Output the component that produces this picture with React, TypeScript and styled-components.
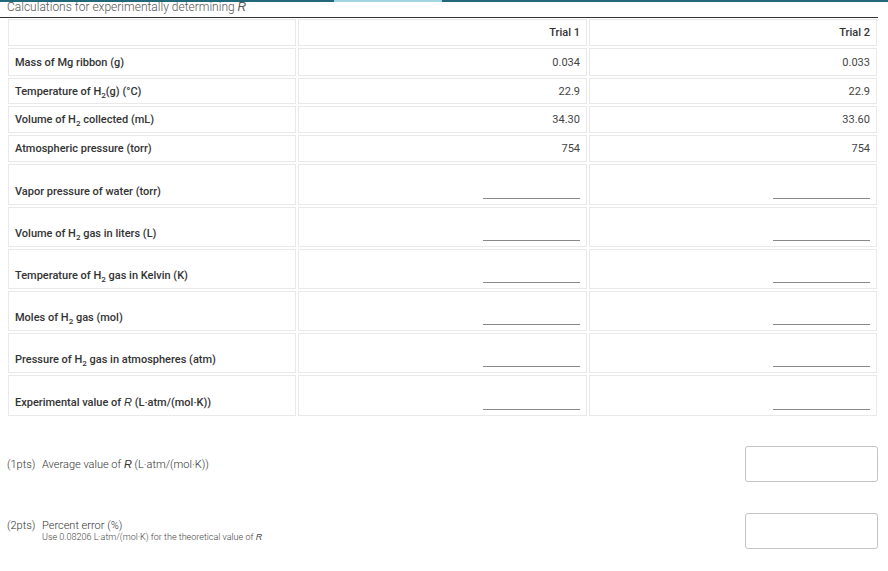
import React from 'react';
import styled, { createGlobalStyle } from 'styled-components';

const GlobalStyle = createGlobalStyle`
  html, body {
    margin: 0;
    padding: 0;
    background: #fff;
    font-family: Roboto, "Liberation Sans", Arial, sans-serif;
    color: #333;
  }
`;

type Row = { label: React.ReactNode; t1?: string; t2?: string; h: number };

const H2 = () => (
  <>
    H<Sub>2</Sub>
  </>
);

const R = () => <Ital>R</Ital>;

const given: Row[] = [
  { label: 'Mass of Mg ribbon (g)', t1: '0.034', t2: '0.033', h: 28 },
  { label: <>Temperature of <H2 />(g) (°C)</>, t1: '22.9', t2: '22.9', h: 26 },
  { label: <>Volume of <H2 /> collected (mL)</>, t1: '34.30', t2: '33.60', h: 27 },
  { label: 'Atmospheric pressure (torr)', t1: '754', t2: '754', h: 27 },
];

const calc: { label: React.ReactNode; h: number }[] = [
  { label: 'Vapor pressure of water (torr)', h: 41 },
  { label: <>Volume of <H2 /> gas in liters (L)</>, h: 40 },
  { label: <>Temperature of <H2 /> gas in Kelvin (K)</>, h: 40 },
  { label: <>Moles of <H2 /> gas (mol)</>, h: 40 },
  { label: <>Pressure of <H2 /> gas in atmospheres (atm)</>, h: 40 },
  { label: <>Experimental value of <R /> (L·atm/(mol·K))</>, h: 41 },
];

const App = () => {
  return (
    <Page>
      <GlobalStyle />
      <TopBar>
        <TopTab />
      </TopBar>
      <Title>
        Calculations for experimentally determining <R />
      </Title>
      <Grid>
        <Cell $h={27} />
        <Cell $h={27} $right>
          <HeadText>Trial 1</HeadText>
        </Cell>
        <Cell $h={27} $right>
          <HeadText>Trial 2</HeadText>
        </Cell>

        {given.map((r, i) => (
          <React.Fragment key={i}>
            <Cell $h={r.h}>
              <Label>{r.label}</Label>
            </Cell>
            <Cell $h={r.h} $right>
              <Value>{r.t1}</Value>
            </Cell>
            <Cell $h={r.h} $right>
              <Value>{r.t2}</Value>
            </Cell>
          </React.Fragment>
        ))}

        {calc.map((r, i) => (
          <React.Fragment key={i}>
            <Cell $h={r.h} $tall>
              <Label $tall>{r.label}</Label>
            </Cell>
            <Cell $h={r.h} $tall $right>
              <Blank />
            </Cell>
            <Cell $h={r.h} $tall $right>
              <Blank />
            </Cell>
          </React.Fragment>
        ))}
      </Grid>

      <Question $first>
        <QText>
          <Pts>(1pts)</Pts>
          <div>
            Average value of <R /> (L·atm/(mol·K))
          </div>
        </QText>
        <AnswerBox />
      </Question>

      <Question>
        <QText>
          <Pts>(2pts)</Pts>
          <div>
            Percent error (%)
            <Note>
              Use 0.08206 L·atm/(mol·K) for the theoretical value of <R />
            </Note>
          </div>
        </QText>
        <AnswerBox />
      </Question>
    </Page>
  );
};

const Page = styled.div`
  position: relative;
  width: 888px;
  height: 571px;
  overflow: hidden;
  padding-right: 10px;
  box-sizing: border-box;
`;

const TopBar = styled.div`
  position: absolute;
  top: 0;
  left: 0;
  right: 0;
  height: 2px;
  background: #23687a;
  z-index: 2;
`;

const TopTab = styled.div`
  position: absolute;
  left: 334px;
  width: 108px;
  top: 0;
  height: 2px;
  background: #9fd6df;
`;

const Title = styled.div`
  margin-top: 0;
  padding: 0 0 3px 7px;
  font-size: 12px;
  line-height: 14px;
  font-weight: 300;
  color: #555;
  border-bottom: 1px solid #333;
`;

const Ital = styled.i`
  font-family: "Liberation Sans", Arial, sans-serif;
  font-style: italic;
`;

const Sub = styled.sub`
  font-size: 8px;
  line-height: 0;
  vertical-align: -3px;
`;

const Grid = styled.div`
  display: grid;
  grid-template-columns: 288px 289px 288px;
  gap: 2px;
  margin: 1px 0 0 8px;
`;

const Cell = styled.div<{ $h: number; $tall?: boolean; $right?: boolean }>`
  box-sizing: border-box;
  height: ${(p) => p.$h}px;
  border: 1px solid #e9e9e9;
  display: flex;
  align-items: ${(p) => (p.$tall ? 'flex-end' : 'center')};
  justify-content: ${(p) => (p.$right ? 'flex-end' : 'flex-start')};
  padding: ${(p) => (p.$tall ? '0 6px 5px 6px' : '0 6px')};
`;

const HeadText = styled.span`
  font-size: 11px;
  font-weight: 500;
  color: #333;
`;

const Label = styled.span<{ $tall?: boolean }>`
  font-size: 11px;
  font-weight: 500;
  color: #333;
  margin-bottom: ${(p) => (p.$tall ? '1px' : '0')};
`;

const Value = styled.span`
  font-size: 11px;
  color: #444;
`;

const Blank = styled.div`
  width: 97px;
  height: 0;
  border-bottom: 1px solid #888;
`;

const Question = styled.div<{ $first?: boolean }>`
  display: flex;
  justify-content: space-between;
  align-items: center;
  margin-top: ${(p) => (p.$first ? '30px' : '31px')};
`;

const QText = styled.div`
  display: flex;
  padding-left: 7px;
  font-size: 11px;
  font-weight: 300;
  color: #333;
  line-height: 13px;
`;

const Pts = styled.span`
  width: 35px;
  flex: none;
`;

const Note = styled.div`
  font-size: 9px;
  line-height: 11px;
  color: #444;
`;

const AnswerBox = styled.div`
  width: 133px;
  height: 36px;
  box-sizing: border-box;
  border: 1px solid #c4c4c4;
  border-radius: 3px;
`;

export default App;
